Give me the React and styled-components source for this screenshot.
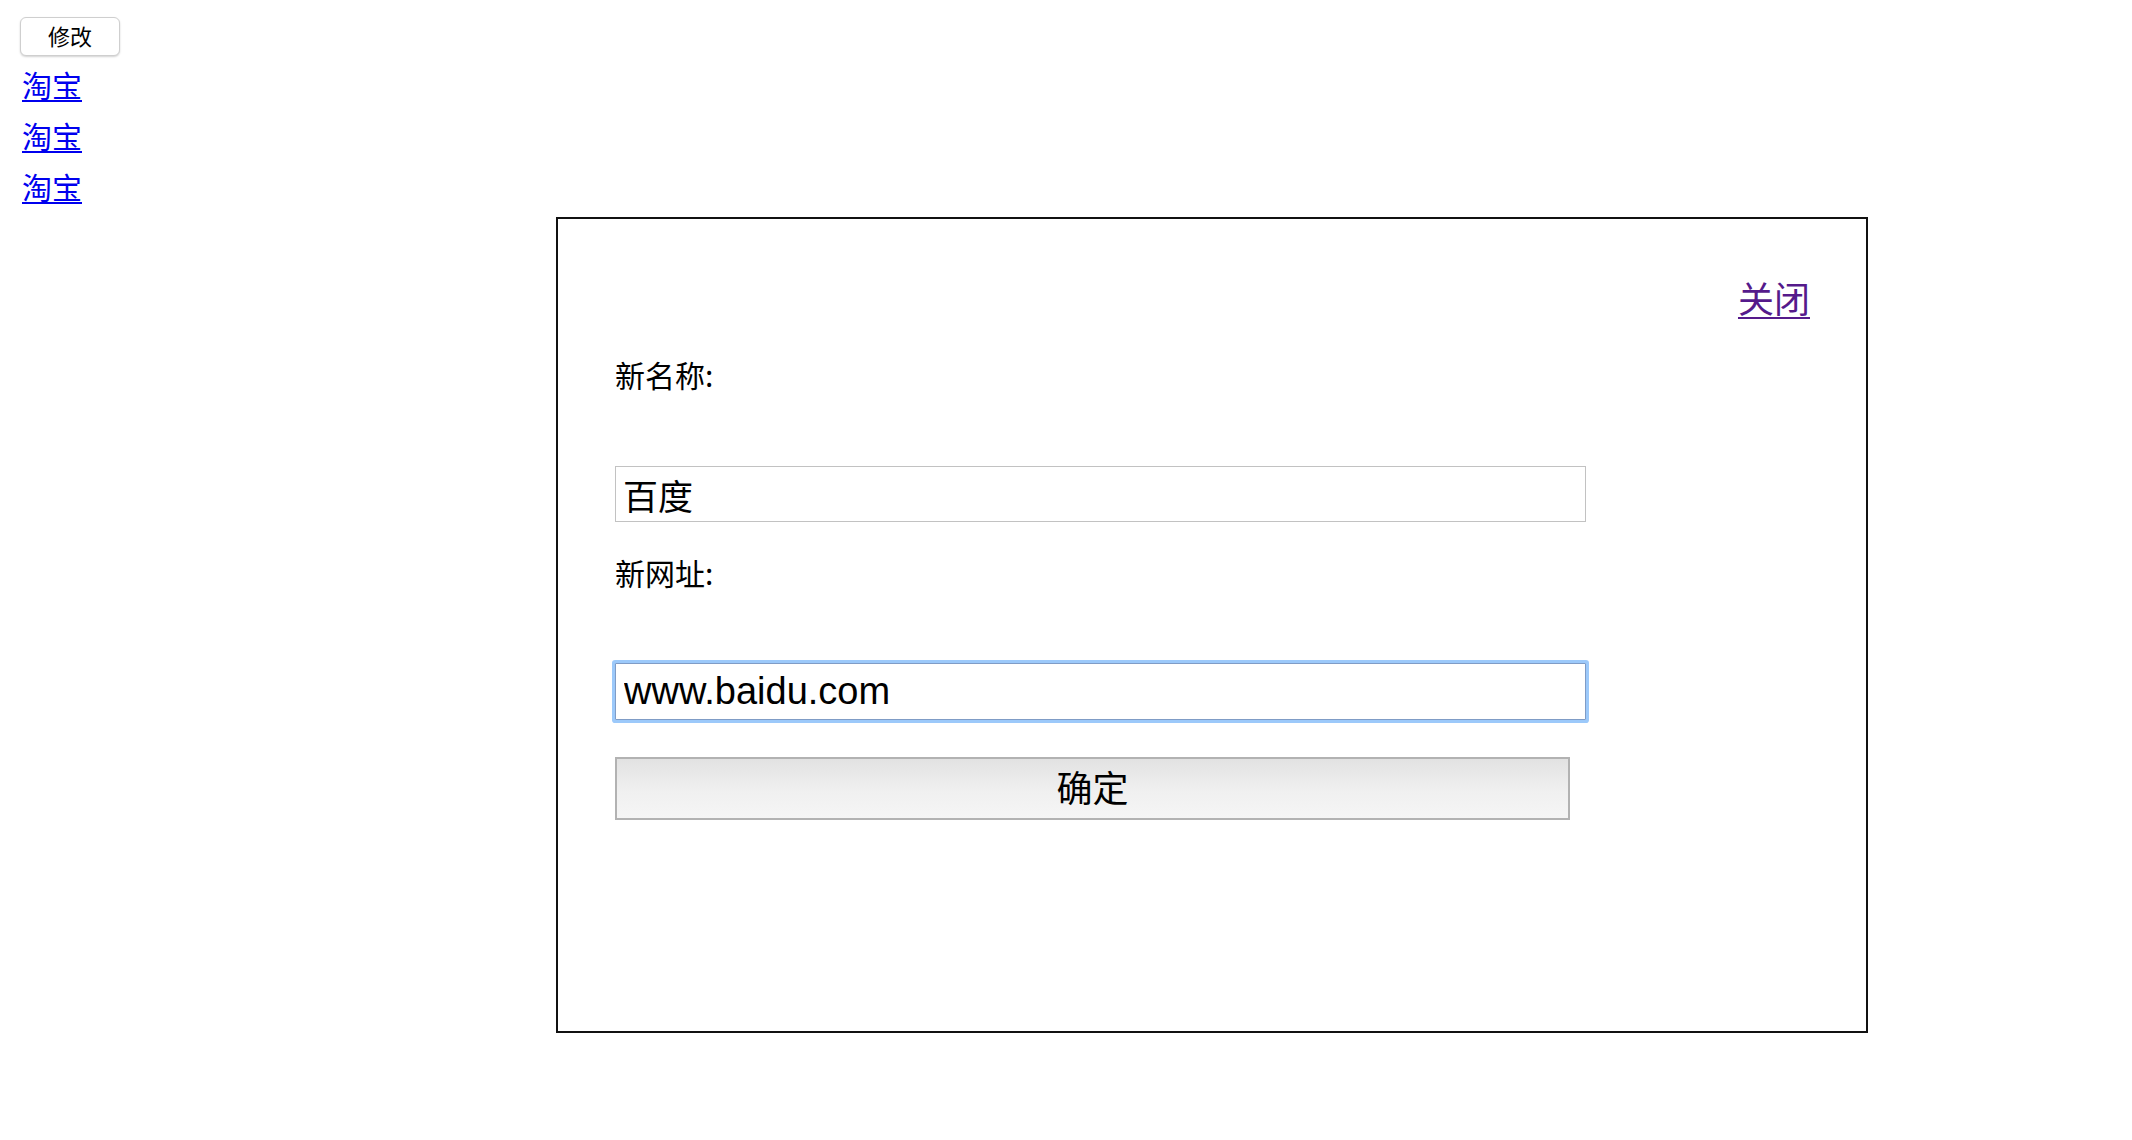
import React from "react";
import styled, { createGlobalStyle } from "styled-components";

const GlobalStyle = createGlobalStyle`
  html, body {
    margin: 0;
    padding: 0;
    background: #ffffff;
  }
  body {
    font-family: "Noto Sans CJK SC", "Liberation Sans", sans-serif;
    color: #000;
  }
`;

const Page = styled.div`
  position: relative;
  width: 2132px;
  height: 1140px;
  padding: 17px 0 0 20px;
  box-sizing: border-box;
`;

const EditButton = styled.button`
  display: block;
  width: 100px;
  height: 39px;
  margin: 0;
  padding: 0 0 3px 0;
  box-sizing: border-box;
  background: #ffffff;
  border: 1px solid #cfcfcf;
  border-radius: 6px;
  box-shadow: 0 1px 2px rgba(0, 0, 0, 0.18);
  font-family: "Noto Sans CJK SC", sans-serif;
  font-size: 22px;
  line-height: 30px;
  color: #000;
  cursor: pointer;
`;

const LinkList = styled.div`
  display: flex;
  flex-direction: column;
  align-items: flex-start;
  margin-top: 3px;
  padding-left: 2px;
`;

const SiteLink = styled.a`
  display: block;
  font-family: "Noto Sans CJK SC", sans-serif;
  font-size: 30px;
  line-height: 51px;
  color: ${(p) => (p.$visited ? "#551a8b" : "#0000ee")};
  text-decoration: underline;
  text-underline-offset: 3px;
  text-decoration-thickness: 2px;
`;

const Modal = styled.div`
  position: absolute;
  left: 556px;
  top: 217px;
  width: 1312px;
  height: 816px;
  box-sizing: border-box;
  border: 2px solid #111111;
  background: #ffffff;
  padding: 48px 56px 0 57px;
  display: flex;
  flex-direction: column;
  align-items: flex-start;
`;

const CloseRow = styled.div`
  align-self: stretch;
  display: flex;
  justify-content: flex-end;
  height: 60px;
`;

const CloseLink = styled.a`
  font-family: "Noto Sans CJK SC", sans-serif;
  font-size: 36px;
  line-height: 60px;
  color: #551a8b;
  text-decoration: underline;
  text-underline-offset: 4px;
  text-decoration-thickness: 2px;
`;

const FieldLabel = styled.div`
  font-family: "Noto Sans CJK SC", sans-serif;
  font-size: 30px;
  line-height: 60px;
  height: 60px;
  margin-top: ${(p) => p.$gap}px;
  color: #000;
`;

const TextInput = styled.input`
  display: block;
  width: 971px;
  height: ${(p) => (p.$focused ? 57 : 56)}px;
  margin: ${(p) => p.$gap}px 0 0 0;
  box-sizing: border-box;
  padding: 0 8px 0 ${(p) => (p.$focused ? 8 : 7)}px;
  border: 1px solid ${(p) => (p.$focused ? "#7f9cc6" : "#c2c2c2")};
  border-radius: ${(p) => (p.$focused ? "1px" : "0")};
  box-shadow: ${(p) => (p.$focused ? "0 0 0 3px #9cc9fa" : "none")};
  outline: none;
  font-family: "Liberation Sans", "Noto Sans CJK SC", sans-serif;
  font-size: ${(p) => p.$size}px;
  color: #000;
  background: #fff;
`;

const SubmitButton = styled.button`
  display: block;
  width: 955px;
  height: 63px;
  margin-top: 37px;
  padding: 0 0 6px 0;
  box-sizing: border-box;
  border: 2px solid #b2b2b2;
  border-radius: 0;
  background: linear-gradient(to bottom, #e2e2e2 0%, #f0f0f0 55%, #f5f5f5 100%);
  font-family: "Noto Sans CJK SC", sans-serif;
  font-size: 36px;
  line-height: 48px;
  color: #000;
  cursor: pointer;
`;

const links = ["淘宝", "淘宝", "淘宝"];

export default function App() {
  return (
    <>
      <GlobalStyle />
      <Page>
        <EditButton type="button">修改</EditButton>
        <LinkList>
          {links.map((name, i) => (
            <SiteLink key={i} href="#">
              {name}
            </SiteLink>
          ))}
        </LinkList>
        <Modal>
          <CloseRow>
            <CloseLink href="#">关闭</CloseLink>
          </CloseRow>
          <FieldLabel $gap={17}>新名称:</FieldLabel>
          <TextInput $gap={62} $size={35} defaultValue="百度" />
          <FieldLabel $gap={20}>新网址:</FieldLabel>
          <TextInput $gap={61} $size={38} $focused defaultValue="www.baidu.com" />
          <SubmitButton type="button">确定</SubmitButton>
        </Modal>
      </Page>
    </>
  );
}
